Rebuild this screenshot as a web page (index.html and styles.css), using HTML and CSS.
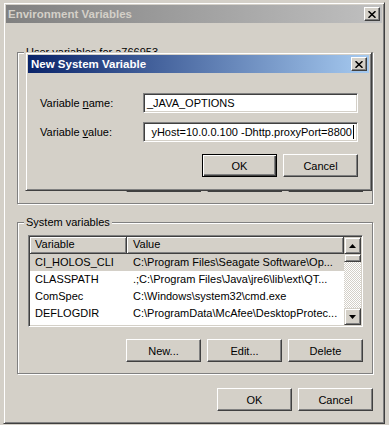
FILE: index.html
```html
<!DOCTYPE html>
<html>
<head>
<meta charset="utf-8">
<title>Environment Variables</title>
<link rel="stylesheet" href="styles.css">
</head>
<body>
<div class="window">
  <div class="titlebar inactive">
    <span class="title">Environment Variables</span>
    <span class="close"><svg width="8" height="7" viewBox="0 0 8 7"><path d="M0.5 0.2 L7.5 6.8 M7.5 0.2 L0.5 6.8" stroke="#000" stroke-width="1.5" fill="none"/></svg></span>
  </div>
  <div class="win-body">
    <fieldset class="group">
      <legend>User variables for a766953</legend>
      <div class="listbox"></div>
      <div class="btnrow">
        <button class="btn">New...</button>
        <button class="btn">Edit...</button>
        <button class="btn">Delete</button>
      </div>
    </fieldset>
    <fieldset class="group system">
      <legend>System variables</legend>
      <div class="listbox">
        <div class="list-main">
          <div class="list-head">
            <span class="hcell">Variable</span>
            <span class="hcell val">Value</span>
          </div>
          <div class="row sel"><span>CI_HOLOS_CLI</span><span>C:\Program Files\Seagate Software\Op...</span></div>
          <div class="row"><span>CLASSPATH</span><span>.;C:\Program Files\Java\jre6\lib\ext\QT...</span></div>
          <div class="row"><span>ComSpec</span><span>C:\Windows\system32\cmd.exe</span></div>
          <div class="row"><span>DEFLOGDIR</span><span>C:\ProgramData\McAfee\DesktopProtec...</span></div>
        </div>
        <div class="scroll">
          <span class="sb-btn"><svg width="7" height="4" viewBox="0 0 7 4"><polygon points="3.5,0 7,4 0,4" fill="#000"/></svg></span>
          <span class="sb-thumb"></span>
          <span class="sb-track"></span>
          <span class="sb-btn"><svg width="7" height="4" viewBox="0 0 7 4"><polygon points="0,0 7,0 3.5,4" fill="#000"/></svg></span>
        </div>
      </div>
      <div class="btnrow">
        <button class="btn">New...</button>
        <button class="btn">Edit...</button>
        <button class="btn">Delete</button>
      </div>
    </fieldset>
    <div class="btnrow main-btns">
      <button class="btn">OK</button>
      <button class="btn">Cancel</button>
    </div>
  </div>

  <div class="dialog">
    <div class="titlebar active">
      <span class="title dlg-title">New System Variable</span>
      <span class="close"><svg width="8" height="7" viewBox="0 0 8 7"><path d="M0.5 0.2 L7.5 6.8 M7.5 0.2 L0.5 6.8" stroke="#000" stroke-width="1.5" fill="none"/></svg></span>
    </div>
    <div class="dlg-body">
      <div class="form">
        <label>Variable <u>n</u>ame:</label>
        <div class="field">_JAVA_OPTIONS</div>
        <label>Variable <u>v</u>alue:</label>
        <div class="field end"><span>yHost=10.0.0.100 -Dhttp.proxyPort=8800</span><span class="caret"></span></div>
      </div>
      <div class="btnrow dlg-btns">
        <button class="btn default">OK</button>
        <button class="btn">Cancel</button>
      </div>
    </div>
  </div>
</div>
</body>
</html>
```

FILE: styles.css
```css
* { box-sizing: border-box; }
html, body { margin: 0; }
body {
  background: #d4d0c8;
  font: 11px "Liberation Sans", Arial, sans-serif;
  color: #000;
  width: 389px;
  height: 425px;
  overflow: hidden;
}

.window {
  position: relative;
  margin: 2px 0 0 3px;
  width: 382px;
  height: 422px;
  border: 1px solid;
  border-color: #d4d0c8 #404040 #404040 #d4d0c8;
  box-shadow: inset 1px 1px #fff, inset -1px -1px #808080;
  padding: 2px;
  background: #d4d0c8;
}

.titlebar {
  height: 18px;
  display: flex;
  align-items: center;
  padding: 0 2px 0 2px;
  font-weight: bold;
  font-size: 11.5px;
}
.title { flex: 1; white-space: nowrap; }
.dlg-title { padding-left: 1px; }
.titlebar.inactive {
  background: linear-gradient(to right, #808080, #c0c0c0);
  color: #d4d0c8;
}
.titlebar.active {
  background: linear-gradient(to right, #0a246a, #a6caf0);
  color: #fff;
}
.close {
  width: 16px;
  height: 14px;
  background: #d4d0c8;
  border: 1px solid;
  border-color: #fff #404040 #404040 #fff;
  box-shadow: inset -1px -1px #808080;
  display: flex;
  align-items: center;
  justify-content: center;
}
.close svg { display: block; }

.win-body { padding: 23px 9px 0 11px; }

.group {
  margin: 0;
  padding: 6px 9px 11px 10px;
  border: 1px solid #808080;
  box-shadow: 1px 1px #fff, inset 1px 1px #fff;
  min-width: 0;
}
.group legend {
  padding: 0 2px;
  margin-left: -4px;
  line-height: 13px;
  background: #d4d0c8;
}
.group.system { margin-top: 12px; }

.listbox {
  height: 92px;
  border: 1px solid;
  border-color: #808080 #fff #fff #808080;
  box-shadow: inset 1px 1px #404040, inset -1px -1px #d4d0c8;
  padding: 1px;
  background: #fff;
  display: flex;
}
.list-main { flex: 1; min-width: 0; }
.list-head, .row {
  display: grid;
  grid-template-columns: 97px 1fr;
}
.hcell {
  height: 17px;
  line-height: 15px;
  padding-left: 5px;
  background: #d4d0c8;
  border-right: 1px solid #404040;
  border-bottom: 1px solid #404040;
  box-shadow: inset 1px 1px #fff, inset -1px -1px #808080;
}
.hcell.val { padding-left: 6px; }
.row {
  height: 17px;
  line-height: 17px;
  white-space: nowrap;
}
.row span { padding-left: 5px; overflow: hidden; }
.row span + span { padding-left: 6px; }
.row.sel { background: #d4d0c8; }

.scroll {
  width: 17px;
  display: flex;
  flex-direction: column;
}
.sb-btn, .sb-thumb {
  background: #d4d0c8;
  border: 1px solid;
  border-color: #d4d0c8 #404040 #404040 #d4d0c8;
  box-shadow: inset 1px 1px #fff, inset -1px -1px #808080;
}
.sb-btn {
  height: 17px;
  display: flex;
  align-items: center;
  justify-content: center;
}
.sb-btn svg { display: block; }
.sb-thumb { height: 8px; }
.sb-track {
  flex: 1;
  background: repeating-conic-gradient(#fff 0 25%, #d4d0c8 0 50%) 0 0 / 2px 2px;
}

.btnrow {
  display: flex;
  justify-content: flex-end;
  gap: 6px;
  margin-top: 12px;
}
.btn {
  width: 75px;
  height: 23px;
  font: inherit;
  color: #000;
  background: #d4d0c8;
  border: 1px solid;
  border-color: #fff #404040 #404040 #fff;
  box-shadow: inset -1px -1px #808080;
  padding: 0;
}
.btn.default {
  border-color: #000;
  box-shadow: inset 1px 1px #fff, inset -1px -1px #404040, inset -2px -2px #808080;
}
.main-btns { margin-top: 14px; }

.dialog {
  position: absolute;
  left: 21px;
  top: 49px;
  width: 347px;
  height: 139px;
  border: 1px solid;
  border-color: #d4d0c8 #404040 #404040 #d4d0c8;
  box-shadow: inset 1px 1px #fff, inset -1px -1px #808080;
  padding: 2px;
  background: #d4d0c8;
}
.dlg-body { padding: 20px 11px 0 12px; }
.form {
  display: grid;
  grid-template-columns: 103px minmax(0, 1fr);
  row-gap: 9px;
  align-items: center;
}
.field {
  height: 20px;
  min-width: 0;
  border: 1px solid;
  border-color: #808080 #fff #fff #808080;
  box-shadow: inset 1px 1px #404040, inset -1px -1px #d4d0c8;
  background: #fff;
  padding: 0 3px 0 3px;
  display: flex;
  align-items: center;
  overflow: hidden;
  white-space: nowrap;
}
.field.end { justify-content: flex-end; }
.caret {
  flex: none;
  width: 1px;
  height: 14px;
  background: #000;
  margin-left: 1px;
}
.dlg-btns { margin-top: 12px; }
```
